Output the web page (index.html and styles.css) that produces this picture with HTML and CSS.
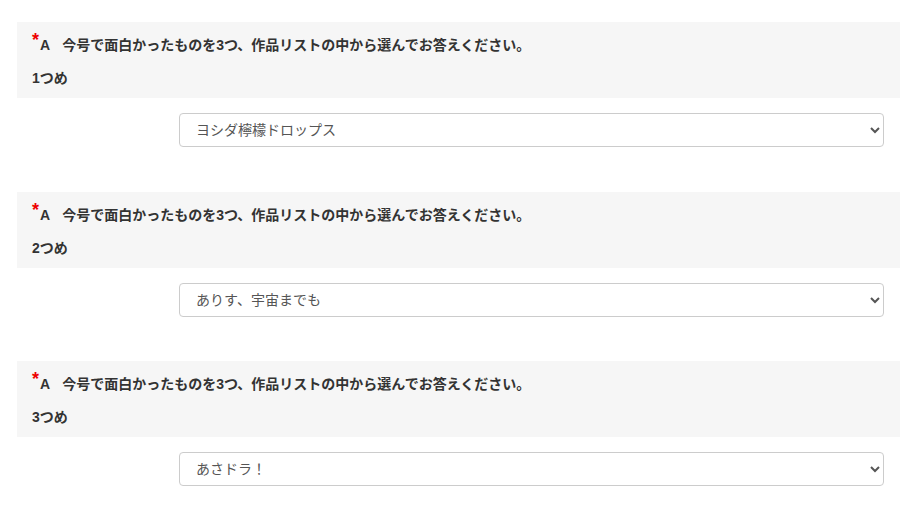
FILE: index.html
```html
<!DOCTYPE html>
<html lang="ja">
<head>
<meta charset="utf-8">
<title>アンケート</title>
<link rel="stylesheet" href="styles.css">
</head>
<body>
<div class="survey">
  <div class="question">
    <div class="q-head">
      <p class="q-title"><span class="req">*</span>A<span class="q-text">今号で面白かったものを3つ、作品リストの中から選んでお答えください。</span></p>
      <p class="q-sub">1つめ</p>
    </div>
    <div class="q-answer">
      <select class="form-control">
        <option>ヨシダ檸檬ドロップス</option>
      </select>
    </div>
  </div>
  <div class="question">
    <div class="q-head">
      <p class="q-title"><span class="req">*</span>A<span class="q-text">今号で面白かったものを3つ、作品リストの中から選んでお答えください。</span></p>
      <p class="q-sub">2つめ</p>
    </div>
    <div class="q-answer">
      <select class="form-control">
        <option>ありす、宇宙までも</option>
      </select>
    </div>
  </div>
  <div class="question">
    <div class="q-head">
      <p class="q-title"><span class="req">*</span>A<span class="q-text">今号で面白かったものを3つ、作品リストの中から選んでお答えください。</span></p>
      <p class="q-sub">3つめ</p>
    </div>
    <div class="q-answer">
      <select class="form-control">
        <option>あさドラ！</option>
      </select>
    </div>
  </div>
</div>
</body>
</html>
```

FILE: styles.css
```css
html, body {
  margin: 0;
  padding: 0;
  background: #fff;
}
body {
  font-family: "Liberation Sans", "Noto Sans CJK JP", sans-serif;
  color: #333;
  font-size: 14px;
}
.survey {
  padding: 22px 16px 0 17px;
  display: flex;
  flex-direction: column;
  gap: 44.5px;
}
.q-head {
  background: #f6f6f6;
  padding: 13px 15px 10px;
  display: flex;
  flex-direction: column;
  gap: 13px;
}
.q-title, .q-sub {
  margin: 0;
  font-weight: bold;
  font-size: 14px;
  line-height: 20px;
  color: #333;
}
.req {
  color: #e00;
  font-size: 18px;
  line-height: 0;
  position: relative;
  top: -4px;
  margin-right: 1px;
}
.q-text {
  margin-left: 12px;
}
.q-answer {
  padding: 15px 16px 0 162px;
}
.form-control {
  display: block;
  width: 100%;
  height: 34px;
  padding: 6px 12px;
  font-family: "Liberation Sans", "Noto Sans CJK JP", sans-serif;
  font-size: 14px;
  color: #555;
  background: #fff;
  border: 1px solid #ccc;
  border-radius: 4px;
}
```
